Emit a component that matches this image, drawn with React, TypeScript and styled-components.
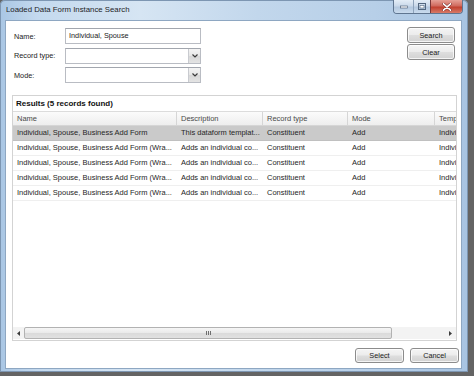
import React from 'react';
import styled, { createGlobalStyle } from 'styled-components';

const GlobalStyle = createGlobalStyle`
  html, body {
    margin: 0;
    padding: 0;
  }
  body {
    width: 474px;
    height: 376px;
    overflow: hidden;
    background: #646464;
    font-family: "Liberation Sans", Arial, sans-serif;
  }
`;

const columns = [
  { key: 'name', title: 'Name', width: 164 },
  { key: 'desc', title: 'Description', width: 86 },
  { key: 'type', title: 'Record type', width: 85 },
  { key: 'mode', title: 'Mode', width: 87 },
  { key: 'tmpl', title: 'Template', width: 22 },
];

const rows = [
  { id: 1, name: 'Individual, Spouse, Business Add Form', desc: 'This dataform templat...', type: 'Constituent', mode: 'Add', tmpl: 'Individual, Spouse' },
  { id: 2, name: 'Individual, Spouse, Business Add Form (Wra...', desc: 'Adds an individual co...', type: 'Constituent', mode: 'Add', tmpl: 'Individual, Spouse' },
  { id: 3, name: 'Individual, Spouse, Business Add Form (Wra...', desc: 'Adds an individual co...', type: 'Constituent', mode: 'Add', tmpl: 'Individual, Spouse' },
  { id: 4, name: 'Individual, Spouse, Business Add Form (Wra...', desc: 'Adds an individual co...', type: 'Constituent', mode: 'Add', tmpl: 'Individual, Spouse' },
  { id: 5, name: 'Individual, Spouse, Business Add Form (Wra...', desc: 'Adds an individual co...', type: 'Constituent', mode: 'Add', tmpl: 'Individual, Spouse' },
];

function App() {
  return (
    <>
      <GlobalStyle />
      <Window>
        <TitleBar>
          <Title>Loaded Data Form Instance Search</Title>
          <Controls>
            <CtrlButton $w={19}>
              <svg width="8" height="4" viewBox="0 0 8 4">
                <rect x="0.5" y="1" width="7" height="2" fill="#fff" stroke="#53667e" strokeWidth="0.7" />
              </svg>
            </CtrlButton>
            <CtrlButton $w={16}>
              <svg width="8" height="7" viewBox="0 0 8 7">
                <rect x="0.5" y="0.5" width="7" height="6" fill="none" stroke="#53667e" strokeWidth="1" />
                <rect x="2" y="2.5" width="4" height="2.5" fill="#fff" stroke="#53667e" strokeWidth="0.6" />
              </svg>
            </CtrlButton>
            <CtrlButton $w={31} $close>
              <svg width="10" height="8" viewBox="0 0 10 8">
                <path d="M1.5 0.8 L8.5 7.2 M8.5 0.8 L1.5 7.2" stroke="#6b2020" strokeWidth="2.6" strokeLinecap="round" />
                <path d="M1.5 0.8 L8.5 7.2 M8.5 0.8 L1.5 7.2" stroke="#fff" strokeWidth="1.6" strokeLinecap="round" />
              </svg>
            </CtrlButton>
          </Controls>
        </TitleBar>
        <Content>
          <TopArea>
            <Form>
              <FieldRow>
                <Label>Name:</Label>
                <TextBox>Individual, Spouse</TextBox>
              </FieldRow>
              <FieldRow>
                <Label>Record type:</Label>
                <SelectBox>
                  <DropButton>
                    <Chevron />
                  </DropButton>
                </SelectBox>
              </FieldRow>
              <FieldRow>
                <Label>Mode:</Label>
                <SelectBox>
                  <DropButton>
                    <Chevron />
                  </DropButton>
                </SelectBox>
              </FieldRow>
            </Form>
            <SideButtons>
              <Button>Search</Button>
              <Button>Clear</Button>
            </SideButtons>
          </TopArea>

          <ResultsPanel>
            <PanelHeading>Results (5 records found)</PanelHeading>
            <GridView>
              <HeaderRow>
                {columns.map((c) => (
                  <HeaderCell key={c.key} $w={c.width}>
                    {c.title}
                  </HeaderCell>
                ))}
              </HeaderRow>
              {rows.map((r, i) => (
                <Row key={r.id} $selected={i === 0}>
                  {columns.map((c) => (
                    <Cell key={c.key} $w={c.width}>
                      {r[c.key as keyof typeof r]}
                    </Cell>
                  ))}
                </Row>
              ))}
            </GridView>
            <HScroll>
              <ScrollArrow>
                <svg width="3" height="5" viewBox="0 0 3 5">
                  <path d="M3 0 L0 2.5 L3 5 Z" fill="#3c3c3c" />
                </svg>
              </ScrollArrow>
              <Thumb>
                <Grip />
              </Thumb>
              <Track />
              <ScrollArrow>
                <svg width="3" height="5" viewBox="0 0 3 5">
                  <path d="M0 0 L3 2.5 L0 5 Z" fill="#3c3c3c" />
                </svg>
              </ScrollArrow>
            </HScroll>
          </ResultsPanel>

          <Footer>
            <Button $wide>Select</Button>
            <Button $wide>Cancel</Button>
          </Footer>
        </Content>
      </Window>
    </>
  );
}

function Chevron() {
  return (
    <svg width="6" height="4" viewBox="0 0 6 4">
      <path d="M0.5 0.5 L3 3 L5.5 0.5" fill="none" stroke="#3a3a3a" strokeWidth="1.2" />
    </svg>
  );
}

const Window = styled.div`
  width: 468px;
  height: 372px;
  display: flex;
  flex-direction: column;
  background: linear-gradient(to right, #a9c6e4 0%, #c4d9ee 8%, #d6e5f3 30%, #c2d7ec 55%, #b7cfe8 80%, #a8c4e2 100%);
  border-radius: 5px 5px 0 0;
  box-shadow: inset 0 0 0 1px #7d96b2;
`;

const TitleBar = styled.div`
  height: 20px;
  display: flex;
  align-items: flex-start;
  padding-left: 6px;
  padding-right: 5px;
`;

const Title = styled.div`
  font-size: 7.8px;
  line-height: 20px;
  color: #1e1e1e;
  flex: 1;
  white-space: nowrap;
`;

const Controls = styled.div`
  display: flex;
  height: 13px;
  border: 1px solid #5f7590;
  border-top: none;
  border-radius: 0 0 4px 4px;
  overflow: hidden;
`;

const CtrlButton = styled.div<{ $w: number; $close?: boolean }>`
  width: ${(p) => p.$w}px;
  display: flex;
  align-items: center;
  justify-content: center;
  border-left: 1px solid ${(p) => (p.$close ? '#7a3636' : '#8ea3bb')};
  background: ${(p) =>
    p.$close
      ? 'linear-gradient(#e6a096 0%, #d06a5e 45%, #c1402f 55%, #d87a68 100%)'
      : 'linear-gradient(#e4edf7 0%, #cad9ea 45%, #b4c8df 55%, #c9dbee 100%)'};
  &:first-child {
    border-left: none;
  }
`;

const Content = styled.div`
  flex: 1;
  display: flex;
  flex-direction: column;
  margin: 0 6px 3px 5px;
  background: #fff;
  border: 1px solid #8ea7c2;
`;

const TopArea = styled.div`
  display: flex;
  justify-content: space-between;
  align-items: flex-start;
  padding: 6px 6px 0 8px;
  margin-bottom: 12px;
`;

const Form = styled.div`
  display: flex;
  flex-direction: column;
  gap: 3.5px;
  padding-top: 1px;
`;

const FieldRow = styled.div`
  display: flex;
  align-items: center;
  height: 16px;
`;

const Label = styled.div`
  width: 51px;
  font-size: 7.3px;
  color: #1b1b1b;
`;

const TextBox = styled.div`
  width: 131px;
  height: 14px;
  border: 1px solid #b9bcc3;
  border-top-color: #a2a6ae;
  padding-left: 3px;
  font-size: 7.3px;
  line-height: 14px;
  color: #1b1b1b;
  background: #fff;
`;

const SelectBox = styled.div`
  width: 134px;
  height: 14px;
  border: 1px solid #b9bcc3;
  border-top-color: #a2a6ae;
  background: #fff;
  display: flex;
  justify-content: flex-end;
`;

const DropButton = styled.div`
  width: 11px;
  height: 14px;
  border-left: 1px solid #c9cbd0;
  background: linear-gradient(#f4f4f4 0%, #e6e6e6 50%, #d7d7d7 51%, #e4e4e4 100%);
  display: flex;
  align-items: center;
  justify-content: center;
`;

const SideButtons = styled.div`
  display: flex;
  flex-direction: column;
  gap: 1px;
`;

const Button = styled.div<{ $wide?: boolean }>`
  width: ${(p) => (p.$wide ? 47 : 46)}px;
  height: ${(p) => (p.$wide ? 13 : 14)}px;
  border: 1px solid #8c8c8c;
  border-radius: 3px;
  background: linear-gradient(#f5f5f5 0%, #ececec 48%, #dedede 52%, #d2d2d2 100%);
  box-shadow: inset 0 0 0 1px rgba(255, 255, 255, 0.75);
  font-size: 7.3px;
  color: #1b1b1b;
  display: flex;
  align-items: center;
  justify-content: center;
`;

const ResultsPanel = styled.div`
  flex: 1;
  display: flex;
  flex-direction: column;
  margin: 0 4px 0 6px;
  border: 1px solid #d3d3d3;
  overflow: hidden;
`;

const PanelHeading = styled.div`
  height: 15px;
  line-height: 15px;
  padding-left: 3px;
  font-size: 8px;
  font-weight: bold;
  color: #111;
`;

const GridView = styled.div`
  flex: 1;
  overflow: hidden;
`;

const HeaderRow = styled.div`
  display: flex;
  height: 15px;
  background: linear-gradient(#fbfbfb, #eeeeee);
  border-top: 1px solid #dcdcdc;
  border-bottom: 1px solid #d6d6d6;
  box-sizing: border-box;
`;

const HeaderCell = styled.div<{ $w: number }>`
  flex: 0 0 ${(p) => p.$w}px;
  box-sizing: border-box;
  padding-left: 4px;
  border-right: 1px solid #d6d6d6;
  font-size: 7.5px;
  line-height: 13px;
  color: #4a4a4a;
  white-space: nowrap;
  overflow: hidden;
  &:last-child {
    border-right: none;
  }
`;

const Row = styled.div<{ $selected?: boolean }>`
  display: flex;
  height: 15px;
  box-sizing: border-box;
  background: ${(p) => (p.$selected ? '#cacaca' : '#fff')};
  border-bottom: 1px solid ${(p) => (p.$selected ? '#c0c0c0' : '#efefef')};
`;

const Cell = styled.div<{ $w: number }>`
  flex: 0 0 ${(p) => p.$w}px;
  box-sizing: border-box;
  padding-left: 4px;
  font-size: 7.5px;
  line-height: 14px;
  color: #262626;
  white-space: nowrap;
  overflow: hidden;
`;

const HScroll = styled.div`
  height: 12px;
  margin-bottom: 1px;
  display: flex;
  align-items: stretch;
  background: #f3f3f3;
`;

const ScrollArrow = styled.div`
  width: 11px;
  display: flex;
  align-items: center;
  justify-content: center;
`;

const Thumb = styled.div`
  width: 366px;
  border: 1px solid #b2b2b2;
  border-radius: 2px;
  background: linear-gradient(#f6f6f6 0%, #e9e9e9 50%, #dadada 51%, #e1e1e1 100%);
  display: flex;
  align-items: center;
  justify-content: center;
`;

const Grip = styled.div`
  width: 5px;
  height: 4px;
  background: repeating-linear-gradient(to right, #6f6f6f 0 1px, transparent 1px 2px);
`;

const Track = styled.div`
  flex: 1;
`;

const Footer = styled.div`
  display: flex;
  justify-content: flex-end;
  gap: 6px;
  padding: 7px 2px 5px 0;
`;

export default App;
